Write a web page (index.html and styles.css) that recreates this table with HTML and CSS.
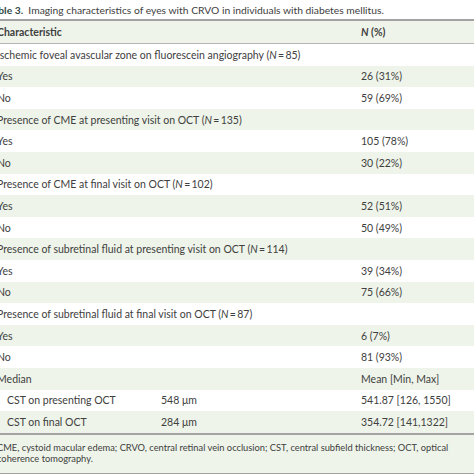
FILE: index.html
```html
<!DOCTYPE html>
<html>
<head>
<meta charset="utf-8">
<link rel="stylesheet" href="styles.css">
</head>
<body>
<div class="figure">
  <div class="caption"><b>Table 3.</b>&nbsp; Imaging characteristics of eyes with CRVO in individuals with diabetes mellitus.</div>
  <div class="table">
    <div class="row head"><div class="c1 span">Characteristic</div><div class="c3"><i>N</i> (%)</div></div>
    <div class="row"><div class="c1 span">Ischemic foveal avascular zone on fluorescein angiography (<i>N</i>&thinsp;=&thinsp;85)</div><div class="c3"></div></div>
    <div class="row alt"><div class="c1 span">Yes</div><div class="c3">26 (31%)</div></div>
    <div class="row"><div class="c1 span">No</div><div class="c3">59 (69%)</div></div>
    <div class="row alt"><div class="c1 span">Presence of CME at presenting visit on OCT (<i>N</i>&thinsp;=&thinsp;135)</div><div class="c3"></div></div>
    <div class="row"><div class="c1 span">Yes</div><div class="c3">105 (78%)</div></div>
    <div class="row alt"><div class="c1 span">No</div><div class="c3">30 (22%)</div></div>
    <div class="row"><div class="c1 span">Presence of CME at final visit on OCT (<i>N</i>&thinsp;=&thinsp;102)</div><div class="c3"></div></div>
    <div class="row alt"><div class="c1 span">Yes</div><div class="c3">52 (51%)</div></div>
    <div class="row"><div class="c1 span">No</div><div class="c3">50 (49%)</div></div>
    <div class="row alt"><div class="c1 span">Presence of subretinal fluid at presenting visit on OCT (<i>N</i>&thinsp;=&thinsp;114)</div><div class="c3"></div></div>
    <div class="row"><div class="c1 span">Yes</div><div class="c3">39 (34%)</div></div>
    <div class="row alt"><div class="c1 span">No</div><div class="c3">75 (66%)</div></div>
    <div class="row"><div class="c1 span">Presence of subretinal fluid at final visit on OCT (<i>N</i>&thinsp;=&thinsp;87)</div><div class="c3"></div></div>
    <div class="row alt"><div class="c1 span">Yes</div><div class="c3">6 (7%)</div></div>
    <div class="row"><div class="c1 span">No</div><div class="c3">81 (93%)</div></div>
    <div class="row alt"><div class="c1 span">Median</div><div class="c3">Mean [Min, Max]</div></div>
    <div class="row"><div class="c1 sub">CST on presenting OCT</div><div class="c2">548 μm</div><div class="c3">541.87 [126, 1550]</div></div>
    <div class="row alt"><div class="c1 sub">CST on final OCT</div><div class="c2">284 μm</div><div class="c3">354.72 [141,1322]</div></div>
  </div>
  <div class="foot">CME, cystoid macular edema; CRVO, central retinal vein occlusion; CST, central subfield thickness; OCT, optical coherence tomography.</div>
</div>
</body>
</html>
```
FILE: styles.css
```css
html, body {
  margin: 0;
  padding: 0;
  background: #ffffff;
}
body {
  font-family: Lato, "Open Sans", sans-serif;
  font-size: 10.5px;
  color: #404040;
  overflow: hidden;
}
.figure {
  margin-left: -3px;
  width: 480px;
}
.caption {
  height: 19px;
  line-height: 20px;
  font-size: 10.3px;
  margin-left: -9px;
  white-space: nowrap;
}
.caption b {
  font-weight: 700;
  color: #2f4a44;
}
.table {
  border-top: 2px solid #a3a3a3;
}
.row {
  display: grid;
  grid-template-columns: 164px 200px 1fr;
  height: 21.6px;
  align-items: center;
  background: #ffffff;
  white-space: nowrap;
}
.row.alt {
  background: #eef4e9;
}
.row.head {
  background: #eef4e9;
  font-weight: 700;
  height: 22px;
  border-bottom: 1px solid #b5b5b5;
}
.c1.span {
  grid-column: 1 / 3;
}
.c1.sub {
  padding-left: 10px;
}
.c3 {
  grid-column: 3;
}
.foot {
  border-top: 2px solid #a3a3a3;
  border-bottom: 2px solid #a3a3a3;
  background: #eef4e9;
  font-size: 9.3px;
  line-height: 11px;
  padding: 7px 12px 9px 0;
}
```
